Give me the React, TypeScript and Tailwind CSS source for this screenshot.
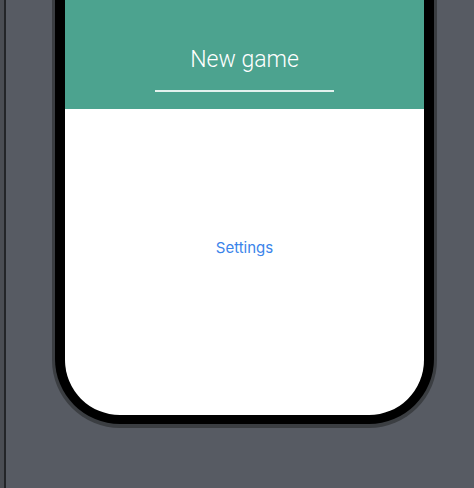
export default function App() {
  return (
    <div className="flex h-[488px] w-[474px] overflow-hidden bg-[#575b63]" style={{ fontFamily: "Inter, 'Noto Sans', sans-serif" }}>
      <div className="w-[4px] bg-[#4a4d53]" />
      <div className="w-[2px] bg-[#232528]" />
      <div className="ml-[46px] h-[428px] w-[385px] rounded-b-[68px] bg-[#3b3e42] px-[3px] pb-[4px]">
        <div className="h-full rounded-b-[65px] bg-black px-[10px] pb-[9px]">
          <div className="flex h-full flex-col overflow-hidden rounded-b-[55px] bg-white">
            <div className="flex h-[109px] flex-col items-center bg-[#4ca38f]">
              <div
                className="mt-[45px] text-[23px] font-light leading-[30px] text-white"
                style={{ fontFamily: "Roboto, 'Noto Sans', sans-serif" }}
              >
                New game
              </div>
              <div className="mt-[15px] h-[2px] w-[179px] bg-[#e3f2ee]" />
            </div>
            <div className="flex flex-col items-center pt-[129px]">
              <button className="text-[15px] leading-[20px] text-[#3a84ea]">Settings</button>
            </div>
          </div>
        </div>
      </div>
    </div>
  );
}
